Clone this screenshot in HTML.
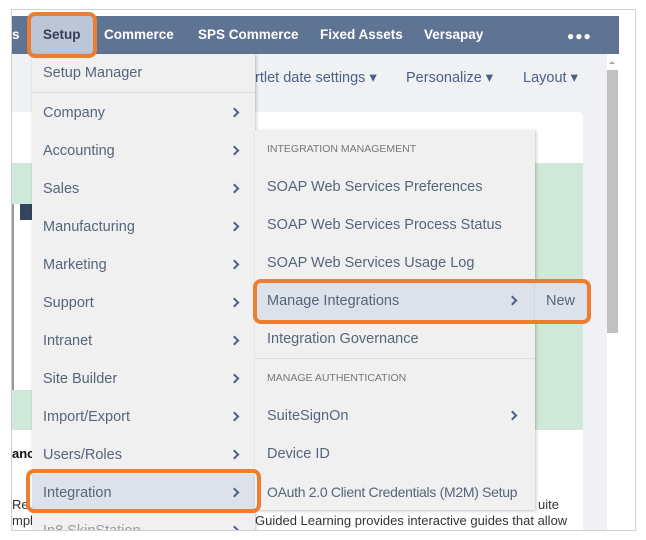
<!DOCTYPE html>
<html><head><style>
*{margin:0;padding:0;box-sizing:border-box}
body{width:646px;height:540px;background:#fff;position:relative;overflow:hidden;font-family:"Liberation Sans",sans-serif;}
.a{position:absolute}
.frame{left:11px;top:9px;width:625px;height:522px;border:1px solid #d0d0d0;background:#fff;overflow:hidden}
.nav{left:12px;top:16px;width:607px;height:38px;background:#5f7393}
.nav span{position:absolute;top:11px;color:#fff;font-weight:bold;font-size:13.5px;white-space:nowrap}
.content{left:12px;top:54px;width:595px;height:476px;background:#eff1f5}
.txt{color:#4d6186;font-size:14.5px;white-space:nowrap}
.menu{background:#f0f0f0;box-shadow:1px 1px 3px rgba(0,0,0,.25)}
.it{position:absolute;left:11px;font-size:14.5px;color:#55657c;white-space:nowrap}
.ch{position:absolute;width:7px;height:7px;border-right:2px solid #4d6186;border-top:2px solid #4d6186;transform:rotate(45deg)}
.hd{position:absolute;left:12px;font-size:10.5px;color:#777;white-space:nowrap}
.hl{position:absolute;border:4px solid #ed7d31;border-radius:8px}
</style></head><body>
<div class="a frame"></div>
<div class="a content"></div>
<div class="a" style="left:607px;top:70px;width:11px;height:263px;background:#c1c1c1"></div>
<div class="a" style="left:609px;top:61px;width:0;height:0;border-left:3px solid transparent;border-right:3px solid transparent;border-bottom:3px solid #aaa"></div>
<div class="a nav">
<span style="left:0">s</span>
<div class="a" style="left:19px;top:0;width:64px;height:38px;background:#bcc6d6"></div>
<span style="left:31px;color:#333f55">Setup</span>
<span style="left:92px">Commerce</span>
<span style="left:186px">SPS Commerce</span>
<span style="left:308px">Fixed Assets</span>
<span style="left:412px">Versapay</span>
<span style="left:555px;top:13px;font-size:12px;letter-spacing:1px">●●●</span>
</div>
<div class="a txt" style="left:255px;top:70px">rtlet date settings ▾</div>
<div class="a txt" style="left:406px;top:70px">Personalize ▾</div>
<div class="a txt" style="left:523px;top:70px">Layout ▾</div>
<div class="a" style="left:12px;top:112px;width:571px;height:318px;background:#fff;border-radius:0 6px 0 0"></div>
<div class="a" style="left:12px;top:163px;width:571px;height:267px;background:#cfe8d9"></div>
<div class="a" style="left:12px;top:204px;width:22px;height:186px;background:#fff;border-left:2px solid #999"></div>
<div class="a" style="left:20px;top:204px;width:14px;height:16px;background:#34445c"></div>
<div class="a" style="left:12px;top:430px;width:571px;height:100px;background:#fff"></div>
<div class="a" style="left:12px;top:446px;font-size:13px;font-weight:bold;color:#111">anc</div>
<div class="a" style="left:12px;top:497px;font-size:13px;color:#333">Re</div>
<div class="a" style="left:12px;top:513px;font-size:13px;color:#333">mpl</div>
<div class="a" style="left:538px;top:497px;font-size:13px;color:#333">uite</div>
<div class="a" style="left:255px;top:513px;font-size:13px;color:#333;white-space:nowrap">Guided Learning provides interactive guides that allow</div>

<div class="a" style="left:0;top:0;width:646px;height:530px;overflow:hidden">
<div class="a menu" style="left:32px;top:54px;width:223px;height:490px">
<div class="it" style="top:11px">Setup Manager</div>
<div class="a" style="left:0;top:38px;width:223px;height:1px;background:#ddd"></div>
<div class="a" style="left:0;top:420px;width:223px;height:38px;background:#dde2ea"></div>
<div class="it" style="top:51px">Company</div><div class="ch" style="left:199px;top:55px"></div>
<div class="it" style="top:89px">Accounting</div><div class="ch" style="left:199px;top:93px"></div>
<div class="it" style="top:127px">Sales</div><div class="ch" style="left:199px;top:131px"></div>
<div class="it" style="top:165px">Manufacturing</div><div class="ch" style="left:199px;top:169px"></div>
<div class="it" style="top:203px">Marketing</div><div class="ch" style="left:199px;top:207px"></div>
<div class="it" style="top:241px">Support</div><div class="ch" style="left:199px;top:245px"></div>
<div class="it" style="top:279px">Intranet</div><div class="ch" style="left:199px;top:283px"></div>
<div class="it" style="top:317px">Site Builder</div><div class="ch" style="left:199px;top:321px"></div>
<div class="it" style="top:355px">Import/Export</div><div class="ch" style="left:199px;top:359px"></div>
<div class="it" style="top:393px">Users/Roles</div><div class="ch" style="left:199px;top:397px"></div>
<div class="it" style="top:431px">Integration</div><div class="ch" style="left:199px;top:435px"></div>
<div class="it" style="top:469px;color:#99a">In8 SkinStation</div><div class="ch" style="left:199px;top:473px"></div>
</div>
</div>

<div class="a menu" style="left:255px;top:130px;width:280px;height:380px">
<div class="a" style="left:0;top:152px;width:280px;height:38px;background:#dde2ea"></div>
<div class="a" style="left:0;top:228px;width:280px;height:1px;background:#ddd"></div>
<div class="hd" style="top:13px">INTEGRATION MANAGEMENT</div>
<div class="it" style="top:49px;left:12px">SOAP Web Services Preferences</div>
<div class="it" style="top:87px;left:12px">SOAP Web Services Process Status</div>
<div class="it" style="top:125px;left:12px">SOAP Web Services Usage Log</div>
<div class="it" style="top:163px;left:12px">Manage Integrations</div><div class="ch" style="left:254px;top:167px"></div>
<div class="it" style="top:201px;left:12px">Integration Governance</div>
<div class="hd" style="top:242px">MANAGE AUTHENTICATION</div>
<div class="it" style="top:278px;left:12px">SuiteSignOn</div><div class="ch" style="left:254px;top:282px"></div>
<div class="it" style="top:316px;left:12px">Device ID</div>
<div class="it" style="top:354px;left:12px;font-size:14px;letter-spacing:-0.3px">OAuth 2.0 Client Credentials (M2M) Setup</div>
</div>
<div class="a menu" style="left:535px;top:282px;width:53px;height:38px;background:#dde2ea"><div class="it" style="top:11px;left:11px">New</div></div>

<div class="hl" style="left:27px;top:12px;width:70px;height:46px"></div>
<div class="hl" style="left:26px;top:469px;width:235px;height:44px"></div>
<div class="hl" style="left:253px;top:279px;width:338px;height:45px"></div>
</body></html>
